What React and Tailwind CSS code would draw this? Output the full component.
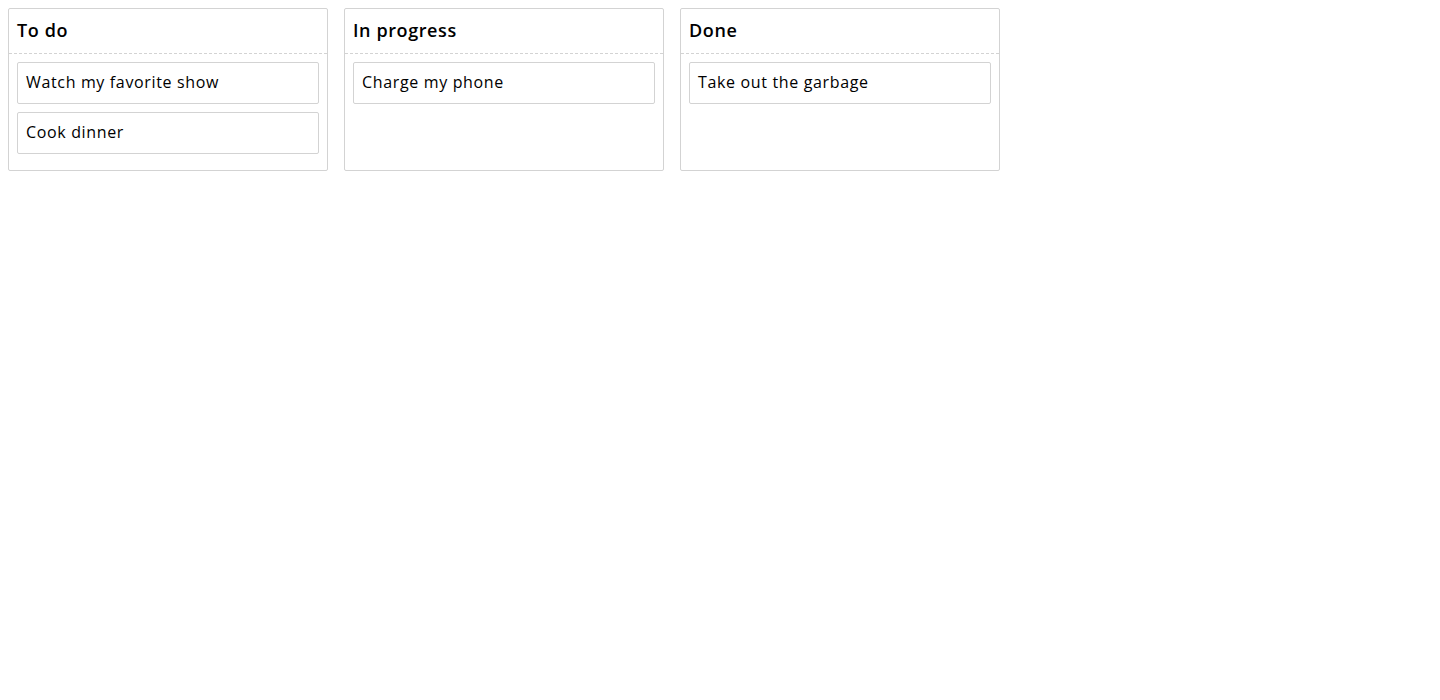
import React from "react";

const columns = [
  { title: "To do", tasks: ["Watch my favorite show", "Cook dinner"] },
  { title: "In progress", tasks: ["Charge my phone"] },
  { title: "Done", tasks: ["Take out the garbage"] },
];

const Column = ({ title, tasks }) => (
  <div className="w-[320px] flex flex-col border border-[#d3d3d3] rounded-[2px] bg-white">
    <h3 className="px-2 pt-[7px] pb-[9px] text-lg leading-7 font-semibold tracking-[0.6px] text-black border-b border-dashed border-[#d3d3d3]">
      {title}
    </h3>
    <div className="flex flex-col p-2">
      {tasks.map((task, index) => (
        <div
          key={index}
          className="mb-2 px-2 pt-[7px] pb-[9px] border border-[#d3d3d3] rounded-[2px] bg-white text-base leading-6 tracking-[0.65px] text-black"
        >
          {task}
        </div>
      ))}
    </div>
  </div>
);

export default function App() {
  return (
    <div
      className="min-h-[700px] bg-white p-2 flex flex-row items-start gap-4"
      style={{ fontFamily: '"Open Sans", sans-serif' }}
    >
      <div className="flex flex-row gap-4 items-stretch">
        {columns.map((col) => (
          <Column key={col.title} title={col.title} tasks={col.tasks} />
        ))}
      </div>
    </div>
  );
}
